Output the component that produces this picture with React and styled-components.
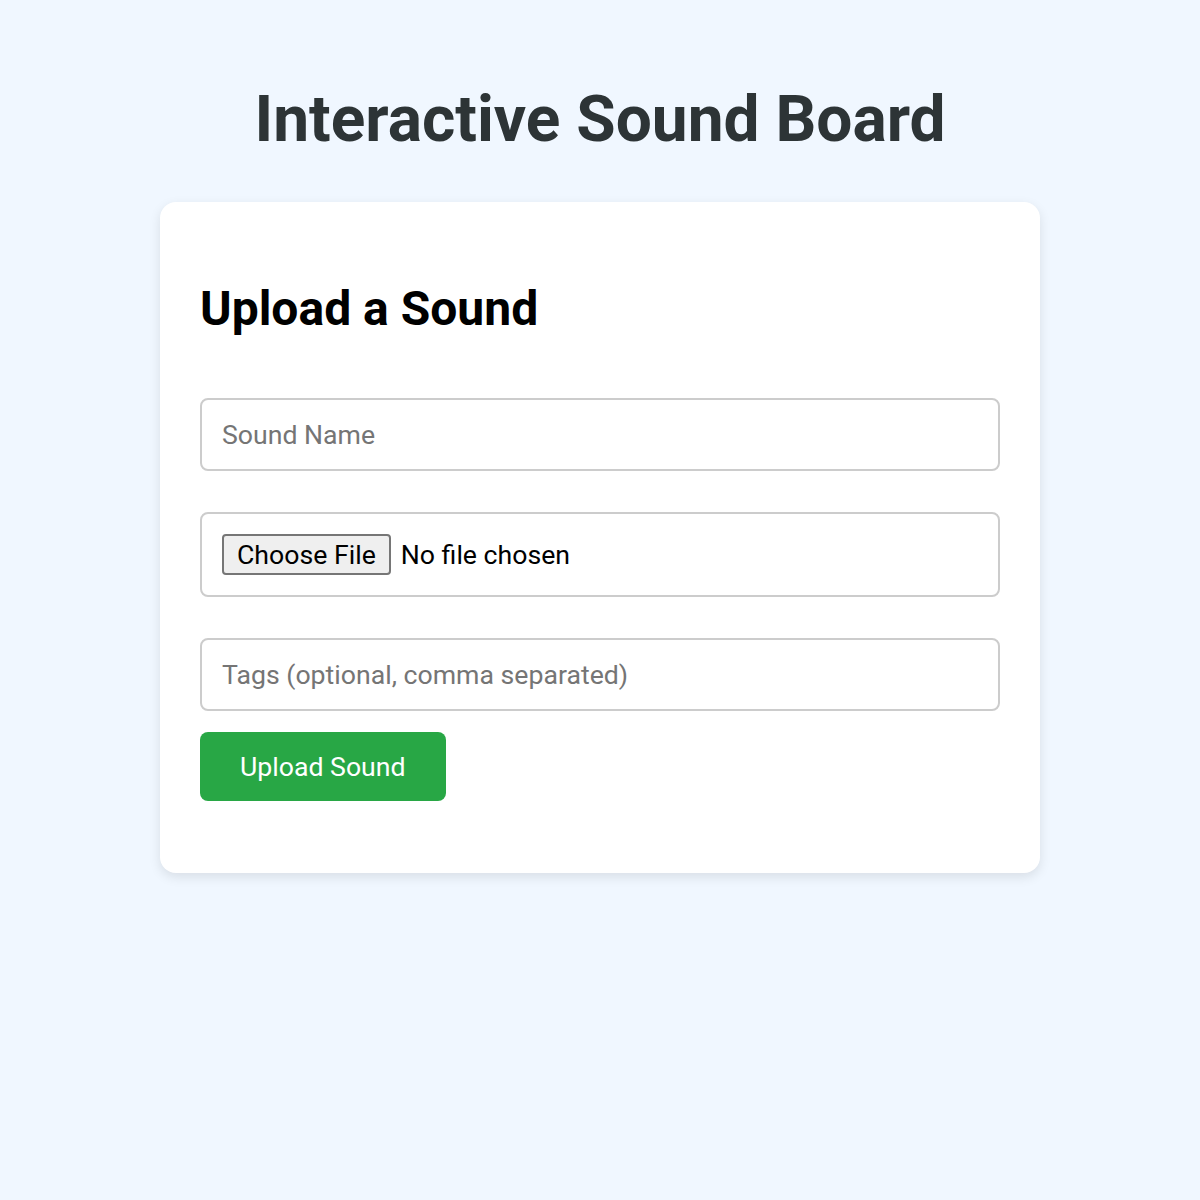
import styled, { createGlobalStyle } from 'styled-components'

const GlobalStyle = createGlobalStyle`
  body {
    margin: 0;
    background: #f0f7ff;
    font-family: Roboto, "Liberation Sans", sans-serif;
  }
`

const Page = styled.main`
  padding: 82px 0 120px;
`

const Title = styled.h1`
  margin: 0 0 43px;
  font-size: 64px;
  line-height: 1.2;
  font-weight: 700;
  color: #2d3436;
  text-align: center;
`

const Card = styled.section`
  box-sizing: border-box;
  width: 880px;
  margin: 0 auto;
  padding: 40px 40px 72px;
  background: #fff;
  border-radius: 16px;
  box-shadow: 0 4px 12px rgba(0, 0, 0, 0.1);
`

const Heading = styled.h2`
  margin: 38px 0 61px;
  font-size: 48px;
  line-height: 1.2;
  font-weight: 700;
  color: #000;
`

const Form = styled.form`
  display: flex;
  flex-direction: column;
  align-items: flex-start;
`

const Field = styled.input`
  box-sizing: border-box;
  width: 100%;
  height: ${(p) => (p.type === 'file' ? '85px' : '73px')};
  margin-bottom: ${(p) => p.$gap}px;
  padding: ${(p) => (p.type === 'file' ? '20px' : '0 20px')};
  border: 2px solid #ccc;
  border-radius: 8px;
  background: #fff;
  font-family: Roboto, "Liberation Sans", sans-serif;
  font-size: 26.67px;
  color: #000;

  &::placeholder {
    color: #757575;
  }

  &::file-selector-button {
    margin-right: 10px;
    padding: 0 13px;
    height: 41px;
    border: 2px solid #767676;
    border-radius: 4px;
    background: #efefef;
    font-family: Roboto, "Liberation Sans", sans-serif;
    font-size: 26.67px;
    color: #000;
  }
`

const Button = styled.button`
  height: 69px;
  padding: 0 40px;
  border: none;
  border-radius: 8px;
  background: #28a745;
  color: #fff;
  font-family: Roboto, "Liberation Sans", sans-serif;
  font-size: 26.67px;
  cursor: pointer;
`

function App() {
  return (
    <>
      <GlobalStyle />
      <Page>
        <Title>Interactive Sound Board</Title>
        <Card>
          <Heading>Upload a Sound</Heading>
          <Form onSubmit={(e) => e.preventDefault()}>
            <Field type="text" placeholder="Sound Name" $gap={41} />
            <Field type="file" accept="audio/*" $gap={41} />
            <Field type="text" placeholder="Tags (optional, comma separated)" $gap={21} />
            <Button type="submit">Upload Sound</Button>
          </Form>
        </Card>
      </Page>
    </>
  )
}

export default App
